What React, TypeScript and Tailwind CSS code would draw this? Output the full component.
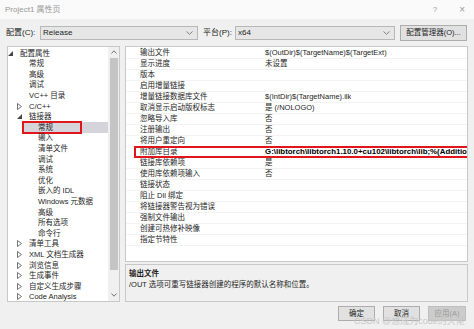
import React from 'react';

const treeItems = [
  { t: '配置属性', lvl: 0, arrow: 'open' },
  { t: '常规', lvl: 1 },
  { t: '高级', lvl: 1 },
  { t: '调试', lvl: 1 },
  { t: 'VC++ 目录', lvl: 1 },
  { t: 'C/C++', lvl: 1, arrow: 'closed' },
  { t: '链接器', lvl: 1, arrow: 'open' },
  { t: '常规', lvl: 2, selected: true },
  { t: '输入', lvl: 2 },
  { t: '清单文件', lvl: 2 },
  { t: '调试', lvl: 2 },
  { t: '系统', lvl: 2 },
  { t: '优化', lvl: 2 },
  { t: '嵌入的 IDL', lvl: 2 },
  { t: 'Windows 元数据', lvl: 2 },
  { t: '高级', lvl: 2 },
  { t: '所有选项', lvl: 2 },
  { t: '命令行', lvl: 2 },
  { t: '清单工具', lvl: 1, arrow: 'closed' },
  { t: 'XML 文档生成器', lvl: 1, arrow: 'closed' },
  { t: '浏览信息', lvl: 1, arrow: 'closed' },
  { t: '生成事件', lvl: 1, arrow: 'closed' },
  { t: '自定义生成步骤', lvl: 1, arrow: 'closed' },
  { t: 'Code Analysis', lvl: 1, arrow: 'closed' },
];

const props = [
  { k: '输出文件', v: '$(OutDir)$(TargetName)$(TargetExt)' },
  { k: '显示进度', v: '未设置' },
  { k: '版本', v: '' },
  { k: '启用增量链接', v: '' },
  { k: '增量链接数据库文件', v: '$(IntDir)$(TargetName).ilk' },
  { k: '取消显示启动版权标志', v: '是 (/NOLOGO)' },
  { k: '忽略导入库', v: '否' },
  { k: '注册输出', v: '否' },
  { k: '将用户重定向', v: '否' },
  { k: '附加库目录', v: 'G:\\libtorch\\libtorch1.10.0+cu102\\libtorch\\lib;%(AdditionalLibraryDirectories)', hl: true },
  { k: '链接库依赖项', v: '是' },
  { k: '使用库依赖项输入', v: '否' },
  { k: '链接状态', v: '' },
  { k: '阻止 Dll 绑定', v: '' },
  { k: '将链接器警告视为错误', v: '' },
  { k: '强制文件输出', v: '' },
  { k: '创建可热修补映像', v: '' },
  { k: '指定节特性', v: '' },
];

function Arrow({ kind }: { kind?: string }) {
  if (kind === 'open')
    return (
      <svg width="5" height="5" viewBox="0 0 5 5">
        <path d="M5 0 L5 5 L0 5 Z" fill="#444" />
      </svg>
    );
  if (kind === 'closed')
    return (
      <svg width="5" height="7" viewBox="0 0 5 7">
        <path d="M0.5 0.5 L4.5 3.5 L0.5 6.5 Z" fill="none" stroke="#666" strokeWidth="0.9" />
      </svg>
    );
  return null;
}

function Chevron() {
  return (
    <svg width="7" height="4" viewBox="0 0 7 4">
      <path d="M0.5 0.5 L3.5 3.3 L6.5 0.5" fill="none" stroke="#777" strokeWidth="0.9" />
    </svg>
  );
}

export default function App() {
  return (
    <div
      className="relative w-[474px] h-[329px] overflow-hidden bg-[#f0f0f0] text-[#1e1e1e]"
      style={{ fontFamily: '"Liberation Sans", "Noto Sans CJK SC", sans-serif' }}
    >
      {/* title bar */}
      <div className="h-[19px] bg-[#fafafa] flex items-center pl-[5px] pr-[9px] text-[8px] text-[#999]">
        <span>Project1 属性页</span>
        <span className="ml-auto mr-[22px] text-[8px] text-[#999]">?</span>
        <span className="text-[10px] text-[#999]">×</span>
      </div>

      {/* config row */}
      <div className="flex items-center h-[16px] mt-[6px] pl-[6px] pr-[7px] text-[8px]">
        <span className="w-[34px]">配置(C):</span>
        <div className="w-[158px] h-[14px] bg-[#e6e6e6] border border-[#b8b8b8] flex items-center pl-[2px] pr-[4px]">
          <span>Release</span>
          <span className="ml-auto flex"><Chevron /></span>
        </div>
        <span className="ml-[5px] w-[32px]">平台(P):</span>
        <div className="w-[160px] h-[14px] bg-[#e6e6e6] border border-[#b8b8b8] flex items-center pl-[2px] pr-[4px]">
          <span>x64</span>
          <span className="ml-auto flex"><Chevron /></span>
        </div>
        <div className="ml-auto w-[67px] h-[16px] bg-[#e1e1e1] border border-[#adadad] flex items-center justify-center text-[7.5px]">
          配置管理器(O)...
        </div>
      </div>

      {/* main area */}
      <div className="flex gap-[5px] pl-[7px] pr-[6px] mt-[5px] h-[256px]">
        {/* tree */}
        <div className="w-[113px] h-full bg-white border border-[#c8c8c8] flex overflow-hidden">
          <div className="flex-1 pt-[1px] text-[7.5px] overflow-hidden">
            {treeItems.map((it, i) => (
              <div
                key={i}
                className="relative h-[10.6px] flex items-center whitespace-nowrap"
                style={{ paddingLeft: it.lvl * 9 }}
              >
                {it.selected && (
                  <>
                    <div className="absolute left-[14px] right-0 top-0 bottom-0 bg-[#d4d4da]" />
                    <div className="absolute left-[14px] w-[60px] -top-[1px] -bottom-[1px] border-2 border-[#e0161c]" />
                  </>
                )}
                <span className="relative w-[12px] flex items-center">
                  <Arrow kind={it.arrow} />
                </span>
                <span className="relative">{it.t}</span>
              </div>
            ))}
          </div>
          {/* scrollbar */}
          <div className="w-[11px] h-full bg-[#f0f0f0] flex flex-col items-center">
            <div className="h-[10px] flex items-center">
              <svg width="6" height="4" viewBox="0 0 6 4">
                <path d="M0.5 3.5 L3 0.8 L5.5 3.5" fill="none" stroke="#666" strokeWidth="0.9" />
              </svg>
            </div>
            <div className="w-[8px] h-[212px] bg-[#c4c4c4] mt-[1px]" />
            <div className="mt-auto h-[12px] flex items-center">
              <svg width="6" height="4" viewBox="0 0 6 4">
                <path d="M0.5 0.5 L3 3.2 L5.5 0.5" fill="none" stroke="#666" strokeWidth="0.9" />
              </svg>
            </div>
          </div>
        </div>

        {/* grid + description */}
        <div className="flex-1 flex flex-col gap-[2px] min-w-0">
          <div className="h-[216px] bg-white border border-[#c8c8c8] pt-[1px] text-[7.5px] overflow-hidden">
            {props.map((p, i) => (
              <div key={i} className="relative h-[11px] flex items-center border-b border-[#f3f3f3] whitespace-nowrap">
                {p.hl && (
                  <div className="absolute left-[8px] -right-[2px] -top-[1px] -bottom-[1px] border-2 border-[#e0161c]" />
                )}
                <span className="w-[139px] pl-[14px] shrink-0">{p.k}</span>
                <span className={p.hl ? 'font-bold text-black text-[7.9px] overflow-hidden' : 'overflow-hidden'}>{p.v}</span>
              </div>
            ))}
          </div>
          <div className="flex-1 bg-[#f0f0f0] border border-[#c8c8c8] pl-[3px] pt-[3px] text-[7.5px] leading-[11px]">
            <div className="font-bold">输出文件</div>
            <div>/OUT 选项可重写链接器创建的程序的默认名称和位置。</div>
          </div>
        </div>
      </div>

      {/* buttons */}
      <div className="flex justify-end gap-[8px] pr-[8px] mt-[4px] text-[7.5px]">
        <div className="w-[37px] h-[15px] bg-[#e1e1e1] border border-[#adadad] flex items-center justify-center">确定</div>
        <div className="w-[37px] h-[15px] bg-[#e1e1e1] border border-[#adadad] flex items-center justify-center">取消</div>
        <div className="w-[38px] h-[15px] bg-[#cccccc] border border-[#bfbfbf] flex items-center justify-center text-[#9a9a9a]">应用(A)</div>
      </div>

      {/* watermark */}
      <div className="absolute left-[354px] top-[315px] text-[9px] text-[#c8c8c8] whitespace-nowrap">
        CSDN @想成为code的大佬
      </div>
    </div>
  );
}
